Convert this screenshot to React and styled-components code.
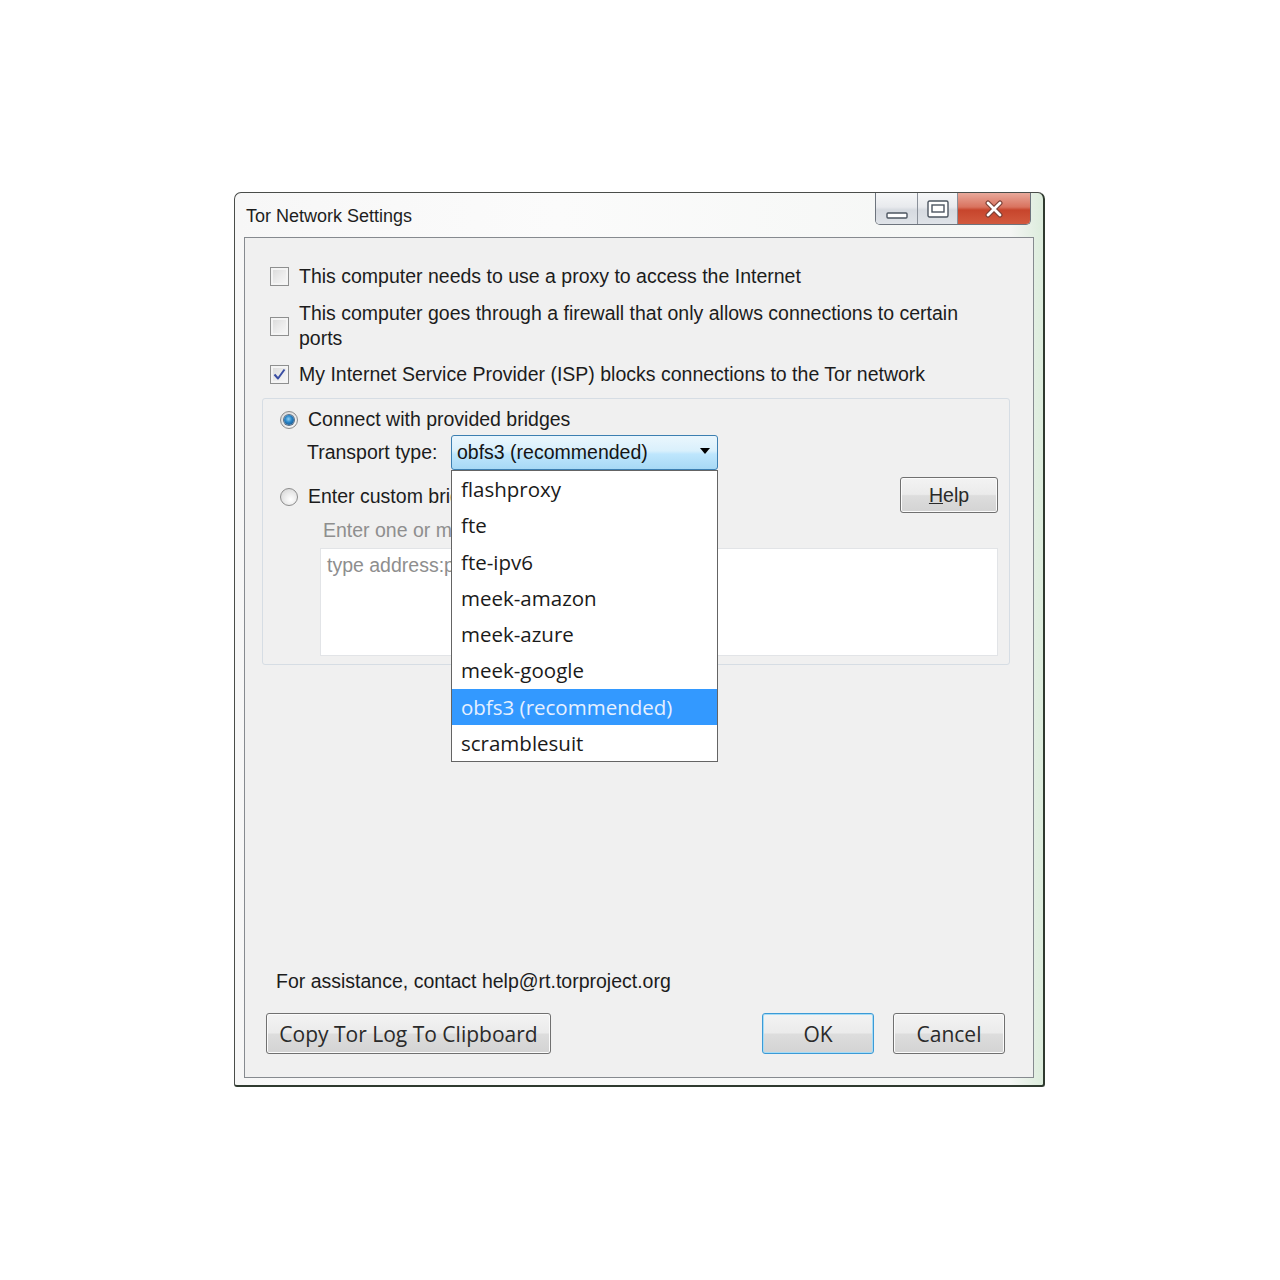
import React from 'react';
import styled, { createGlobalStyle } from 'styled-components';

const GlobalStyle = createGlobalStyle`
  html, body {
    margin: 0;
    padding: 0;
    background: #ffffff;
  }
  body {
    font-family: "Liberation Sans", Arial, sans-serif;
    color: #1c1c1c;
  }
`;

const Page = styled.div`
  width: 1280px;
  height: 1280px;
  box-sizing: border-box;
  padding: 192px 0 0 234px;
`;

const Window = styled.div`
  width: 811px;
  height: 895px;
  box-sizing: border-box;
  display: flex;
  flex-direction: column;
  border: 1px solid #4a4d4a;
  border-right: 2px solid #2f3a2f;
  border-bottom: 2px solid #2f3a2f;
  border-radius: 7px 7px 3px 3px;
  padding: 0 9px 7px 9px;
  background: linear-gradient(to right, #f7f7f7 0%, #fbfbfb 40%, #f4f6f4 96%, #dcecdc 100%);
`;

const TitleBar = styled.div`
  height: 44px;
  display: flex;
  justify-content: space-between;
  align-items: flex-start;
  flex-shrink: 0;
`;

const Title = styled.div`
  margin: 11px 0 0 2px;
  font-size: 18px;
  line-height: 24px;
  color: #1e1e1e;
`;

const CaptionGroup = styled.div`
  display: flex;
  margin-right: 3px;
  height: 31px;
  border: 1px solid #6d747d;
  border-top: none;
  border-radius: 0 0 5px 5px;
  overflow: hidden;
`;

const CaptionButton = styled.div`
  width: ${p => p.$w}px;
  display: flex;
  align-items: center;
  justify-content: center;
  box-sizing: border-box;
  border-left: ${p => (p.$first ? 'none' : '1px solid #8a9099')};
  background: ${p =>
    p.$close
      ? 'linear-gradient(to bottom, #e9a99b 0%, #d9735f 45%, #c7452c 55%, #d25a3e 100%)'
      : 'linear-gradient(to bottom, #f6f7f8 0%, #e8eaed 45%, #d6dae0 55%, #dfe3e8 100%)'};
`;

const Content = styled.div`
  flex: 1;
  display: flex;
  flex-direction: column;
  border: 1px solid #868a8f;
  background: #f0f0f0;
  padding: 26px 23px 23px 17px;
`;

const CheckList = styled.div`
  display: flex;
  flex-direction: column;
  padding-left: 8px;
`;

const CheckRow = styled.div`
  display: flex;
  align-items: center;
  gap: 10px;
  margin-top: ${p => p.$mt || 0}px;
`;

const Label = styled.div`
  font-size: 19.5px;
  line-height: 25px;
  color: ${p => (p.$muted ? '#8e8e8e' : '#1c1c1c')};
  max-width: ${p => (p.$wrap ? '700px' : 'none')};
  white-space: ${p => (p.$wrap ? 'normal' : 'nowrap')};
`;

const Box = styled.div`
  width: 19px;
  height: 19px;
  flex-shrink: 0;
  box-sizing: border-box;
  border: 1px solid #8e8f8f;
  background: linear-gradient(135deg, #d8d8d8 0%, #ececec 55%, #f8f8f8 100%);
  box-shadow: inset 0 0 0 2px #f4f4f4;
  display: flex;
  align-items: center;
  justify-content: center;
`;

const Radio = styled.div`
  width: 18px;
  height: 18px;
  flex-shrink: 0;
  box-sizing: border-box;
  border-radius: 50%;
  border: 1px solid #8c8c8c;
  background: radial-gradient(circle at 60% 65%, #ffffff 0%, #e6e6e6 55%, #cfcfcf 100%);
  display: flex;
  align-items: center;
  justify-content: center;
`;

const RadioDot = styled.div`
  width: 10px;
  height: 10px;
  border-radius: 50%;
  background: radial-gradient(circle at 45% 40%, #8fd0f5 0%, #2a86c8 40%, #0f3f73 100%);
  box-shadow: 0 0 0 1px #5a6f86;
`;

const Group = styled.div`
  margin-top: 11px;
  border: 1px solid #d6dde4;
  border-radius: 3px;
  padding: 8px 11px 8px 17px;
  display: flex;
  flex-direction: column;
`;

const RadioRow = styled.div`
  display: flex;
  align-items: center;
  gap: 10px;
  height: ${p => p.$h || 25}px;
  margin-top: ${p => p.$mt || 0}px;
`;

const TransportRow = styled.div`
  display: flex;
  align-items: center;
  margin: 3px 0 0 27px;
  height: 35px;
`;

const TransportLabel = styled.div`
  width: 144px;
  font-size: 19.5px;
  line-height: 25px;
  white-space: nowrap;
`;

const SelectWrap = styled.div`
  position: relative;
  width: 267px;
  height: 35px;
`;

const Select = styled.div`
  height: 100%;
  box-sizing: border-box;
  border: 1px solid #3c7fb1;
  border-radius: 3px;
  background: linear-gradient(to bottom, #eaf6fd 0%, #d9f0fc 45%, #bee6fd 55%, #a7d9f5 100%);
  display: flex;
  align-items: center;
  justify-content: space-between;
  padding: 0 7px 0 5px;
  font-size: 19.5px;
  color: #141414;
`;

const Arrow = styled.div`
  width: 0;
  height: 0;
  border-left: 5px solid transparent;
  border-right: 5px solid transparent;
  border-top: 6px solid #000;
  margin-top: -3px;
`;

const List = styled.div`
  position: absolute;
  top: 100%;
  left: 0;
  width: 100%;
  box-sizing: border-box;
  border: 1px solid #646464;
  background: #ffffff;
  z-index: 5;
`;

const Item = styled.div`
  height: 36.25px;
  display: flex;
  align-items: center;
  padding-left: 9px;
  font-family: "Open Sans", "Noto Sans", sans-serif;
  font-size: 20.5px;
  color: ${p => (p.$active ? '#e6f0ff' : '#1a1a1a')};
  background: ${p => (p.$active ? '#3399ff' : 'transparent')};
`;

const Button = styled.div`
  box-sizing: border-box;
  display: flex;
  align-items: center;
  justify-content: center;
  width: ${p => p.$w}px;
  height: ${p => p.$h}px;
  margin-left: ${p => (p.$auto ? 'auto' : '0')};
  border: 1px solid ${p => (p.$focus ? '#3c9ad6' : '#707070')};
  border-radius: 3px;
  background: linear-gradient(to bottom, #f3f3f3 0%, #ebebeb 48%, #dddddd 52%, #d3d3d3 100%);
  box-shadow: inset 0 0 0 1px ${p => (p.$focus ? '#a6dcf6' : '#fbfbfb')};
  font-family: ${p => (p.$segoe ? '"Open Sans", "Noto Sans", sans-serif' : '"Liberation Sans", Arial, sans-serif')};
  font-size: ${p => (p.$segoe ? '21px' : '19.5px')};
  color: #2a2a2a;
  white-space: nowrap;
`;

const HelpHint = styled.div`
  margin: 4.5px 0 0 43px;
  font-size: 19.5px;
  line-height: 25px;
  color: #8e8e8e;
  white-space: nowrap;
`;

const TextArea = styled.div`
  margin: 5.5px 0 0 40px;
  height: 108px;
  box-sizing: border-box;
  background: #ffffff;
  border: 1px solid #e2e4e7;
  padding: 4px 6px;
  font-size: 19.5px;
  line-height: 25px;
  color: #8e8e8e;
`;

const Spacer = styled.div`
  flex: 1;
`;

const Assist = styled.div`
  padding-left: 14px;
  font-size: 19.5px;
  line-height: 25px;
`;

const ButtonRow = styled.div`
  display: flex;
  align-items: center;
  gap: 19px;
  margin: 19.5px 5px 0 4px;
`;

const Check = () => (
  <svg width="15" height="15" viewBox="0 0 15 15">
    <path d="M2.5 7.5 L6 11.5 L12.5 2.5" fill="none" stroke="#3a4ea3" strokeWidth="2" strokeLinejoin="round" />
  </svg>
);

const App = () => {
  const transports = [
    'flashproxy',
    'fte',
    'fte-ipv6',
    'meek-amazon',
    'meek-azure',
    'meek-google',
    'obfs3 (recommended)',
    'scramblesuit',
  ];

  return (
    <>
      <GlobalStyle />
      <Page>
        <Window>
          <TitleBar>
            <Title>Tor Network Settings</Title>
            <CaptionGroup>
              <CaptionButton $w={41} $first>
                <svg width="22" height="8" viewBox="0 0 22 8" style={{ marginTop: 14 }}>
                  <rect x="1" y="1" width="20" height="5" rx="1" fill="#ffffff" stroke="#4c5560" strokeWidth="1.4" />
                </svg>
              </CaptionButton>
              <CaptionButton $w={40}>
                <svg width="22" height="18" viewBox="0 0 22 18">
                  <rect x="1" y="1" width="20" height="16" rx="1.5" fill="#ffffff" stroke="#4c5560" strokeWidth="1.4" />
                  <rect x="5" y="5" width="12" height="7" fill="#ffffff" stroke="#4c5560" strokeWidth="1.4" />
                </svg>
              </CaptionButton>
              <CaptionButton $w={73} $close>
                <svg width="22" height="18" viewBox="0 0 22 18">
                  <path d="M5 3 L17 15 M17 3 L5 15" stroke="#7a3f35" strokeWidth="5" strokeLinecap="round" />
                  <path d="M5 3 L17 15 M17 3 L5 15" stroke="#ffffff" strokeWidth="2.8" strokeLinecap="round" />
                </svg>
              </CaptionButton>
            </CaptionGroup>
          </TitleBar>

          <Content>
            <CheckList>
              <CheckRow>
                <Box />
                <Label>This computer needs to use a proxy to access the Internet</Label>
              </CheckRow>
              <CheckRow $mt={12}>
                <Box />
                <Label $wrap>
                  This computer goes through a firewall that only allows connections to certain ports
                </Label>
              </CheckRow>
              <CheckRow $mt={11}>
                <Box>
                  <Check />
                </Box>
                <Label>My Internet Service Provider (ISP) blocks connections to the Tor network</Label>
              </CheckRow>
            </CheckList>

            <Group>
              <RadioRow>
                <Radio>
                  <RadioDot />
                </Radio>
                <Label>Connect with provided bridges</Label>
              </RadioRow>
              <TransportRow>
                <TransportLabel>Transport type:</TransportLabel>
                <SelectWrap>
                  <Select>
                    <span>obfs3 (recommended)</span>
                    <Arrow />
                  </Select>
                  <List>
                    {transports.map(t => (
                      <Item key={t} $active={t === 'obfs3 (recommended)'}>
                        {t}
                      </Item>
                    ))}
                  </List>
                </SelectWrap>
              </TransportRow>
              <RadioRow $h={36} $mt={7}>
                <Radio style={{ marginTop: 3 }} />
                <Label style={{ marginTop: 3 }}>Enter custom bridges</Label>
                <Button $w={98} $h={36} $auto>
                  <span>
                    <u>H</u>elp
                  </span>
                </Button>
              </RadioRow>
              <HelpHint>Enter one or more bridge relays (one per line)</HelpHint>
              <TextArea>type address:port</TextArea>
            </Group>

            <Spacer />

            <Assist>For assistance, contact help@rt.torproject.org</Assist>
            <ButtonRow>
              <Button $w={285} $h={41} $segoe>
                Copy Tor Log To Clipboard
              </Button>
              <Button $w={112} $h={41} $segoe $auto $focus>
                OK
              </Button>
              <Button $w={112} $h={41} $segoe>
                Cancel
              </Button>
            </ButtonRow>
          </Content>
        </Window>
      </Page>
    </>
  );
};

export default App;
